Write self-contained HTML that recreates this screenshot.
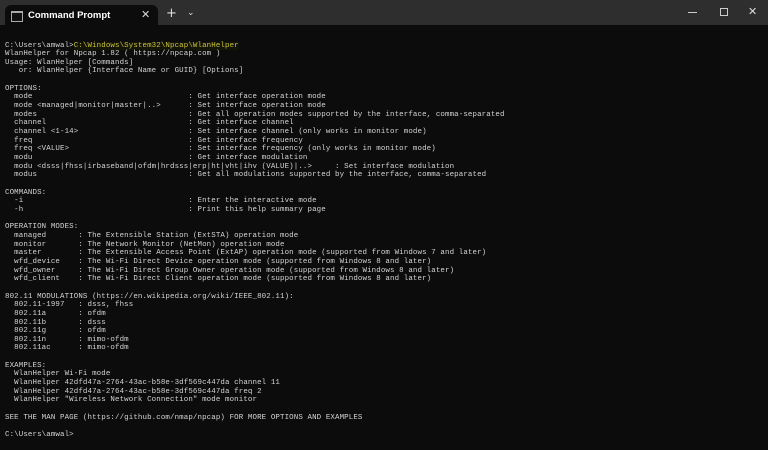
<!DOCTYPE html>
<html><head><meta charset="utf-8"><style>
html,body{margin:0;padding:0;width:768px;height:450px;overflow:hidden;background:#0c0c0c}
.bar{position:absolute;left:0;top:0;width:768px;height:25px;background:#2e2e2e}
.tab{position:absolute;left:5px;top:5px;width:153px;height:21px;background:#0c0c0c;border-radius:6px 6px 0 0}
.ttl{position:absolute;left:28px;top:10px;font:bold 9.5px "Liberation Sans",sans-serif;color:#fff}
.ic{position:absolute;left:11px;top:11px;width:10px;height:8px;border:1px solid #aaa;background:#111;border-top-width:2px}
.g{position:absolute;color:#ddd;font-family:"DejaVu Sans",sans-serif}
pre{position:absolute;left:5px;top:41.5px;margin:0;font:7.45px/8.66px "Liberation Mono",monospace;letter-spacing:0.12px;color:#d4d4d4}
.y{color:#c9c23a;background:#141408}
</style></head><body>
<div class="bar"></div>
<div class="tab"></div>
<div class="ic"></div>
<div class="ttl">Command Prompt</div>
<div class="g" style="left:141px;top:8px;font-size:11px">✕</div>
<div class="g" style="left:166px;top:6px;font-size:13px">+</div>
<div class="g" style="left:187px;top:8px;font-size:9px">⌄</div>
<div style="position:absolute;left:688px;top:12px;width:9px;height:1px;background:#ccc"></div>
<div style="position:absolute;left:720px;top:8px;width:6px;height:6px;border:1px solid #ccc"></div>
<div class="g" style="left:748px;top:5px;font-size:11px">✕</div>
<pre>C:\Users\amwal&gt;<span class="y">C:\Windows\System32\Npcap\WlanHelper</span>
WlanHelper for Npcap 1.82 ( https://npcap.com )
Usage: WlanHelper [Commands]
   or: WlanHelper {Interface Name or GUID} [Options]

OPTIONS:
  mode                                  : Get interface operation mode
  mode &lt;managed|monitor|master|..&gt;      : Set interface operation mode
  modes                                 : Get all operation modes supported by the interface, comma-separated
  channel                               : Get interface channel
  channel &lt;1-14&gt;                        : Set interface channel (only works in monitor mode)
  freq                                  : Get interface frequency
  freq &lt;VALUE&gt;                          : Set interface frequency (only works in monitor mode)
  modu                                  : Get interface modulation
  modu &lt;dsss|fhss|irbaseband|ofdm|hrdsss|erp|ht|vht|ihv (VALUE)|..&gt;     : Set interface modulation
  modus                                 : Get all modulations supported by the interface, comma-separated

COMMANDS:
  -i                                    : Enter the interactive mode
  -h                                    : Print this help summary page

OPERATION MODES:
  managed       : The Extensible Station (ExtSTA) operation mode
  monitor       : The Network Monitor (NetMon) operation mode
  master        : The Extensible Access Point (ExtAP) operation mode (supported from Windows 7 and later)
  wfd_device    : The Wi-Fi Direct Device operation mode (supported from Windows 8 and later)
  wfd_owner     : The Wi-Fi Direct Group Owner operation mode (supported from Windows 8 and later)
  wfd_client    : The Wi-Fi Direct Client operation mode (supported from Windows 8 and later)

802.11 MODULATIONS (https://en.wikipedia.org/wiki/IEEE_802.11):
  802.11-1997   : dsss, fhss
  802.11a       : ofdm
  802.11b       : dsss
  802.11g       : ofdm
  802.11n       : mimo-ofdm
  802.11ac      : mimo-ofdm

EXAMPLES:
  WlanHelper Wi-Fi mode
  WlanHelper 42dfd47a-2764-43ac-b58e-3df569c447da channel 11
  WlanHelper 42dfd47a-2764-43ac-b58e-3df569c447da freq 2
  WlanHelper "Wireless Network Connection" mode monitor

SEE THE MAN PAGE (https://github.com/nmap/npcap) FOR MORE OPTIONS AND EXAMPLES

C:\Users\amwal&gt;</pre>
</body></html>
